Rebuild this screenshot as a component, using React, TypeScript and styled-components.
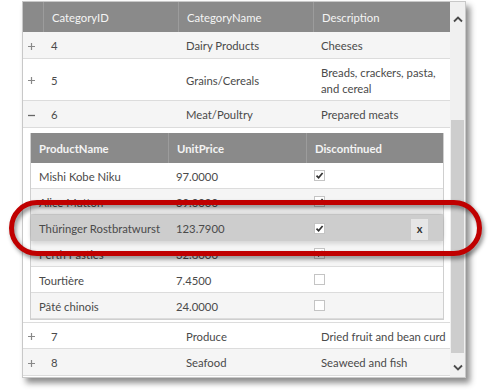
import React, { FC } from 'react';
import styled, { createGlobalStyle } from 'styled-components';

const GlobalStyle = createGlobalStyle`
  html, body {
    margin: 0;
    padding: 0;
    background: #fff;
  }
  body {
    font-family: Lato, 'Open Sans', sans-serif;
    font-size: 11.3px;
    color: #4a4a4a;
  }
`;

const Page = styled.div`
  position: relative;
  width: 500px;
  height: 391px;
  overflow: hidden;
  padding: 1px 0 0 22px;
  box-sizing: border-box;
`;

const Panel = styled.div`
  display: flex;
  width: 442px;
  height: 375px;
  border: 1px solid #c8c8c8;
  background: #fff;
  box-shadow: 4px 5px 6px rgba(0, 0, 0, 0.45);
`;

const Content = styled.div`
  width: 427px;
  display: flex;
  flex-direction: column;
`;

const outerCols = '20px 135px 135px 1fr';
const innerCols = '137px 138px 1fr';

const HeaderRow = styled.div<{ cols: string; height: number; bold?: boolean }>`
  display: grid;
  grid-template-columns: ${(p) => p.cols};
  height: ${(p) => p.height}px;
  background: #8a8a8a;
  color: #f4f4f4;
  font-weight: ${(p) => (p.bold ? 700 : 400)};
  > div {
    display: flex;
    align-items: center;
    padding-left: 8px;
    border-left: 1px solid #9c9c9c;
  }
  > div:first-child {
    border-left: none;
  }
`;

const Row = styled.div<{ cols: string; height: number; bg?: string }>`
  display: grid;
  grid-template-columns: ${(p) => p.cols};
  height: ${(p) => p.height}px;
  box-sizing: border-box;
  border-bottom: 1px solid #dcdcdc;
  background: ${(p) => p.bg || '#fff'};
  line-height: 16px;
  > div {
    display: flex;
    align-items: center;
    padding-left: 8px;
    padding-top: 2px;
    min-width: 0;
    white-space: nowrap;
  }
`;

const DragRow = styled(Row)`
  box-shadow: 0 -3px 4px rgba(0, 0, 0, 0.12), 0 3px 4px rgba(0, 0, 0, 0.12);
  position: relative;
  border-bottom: none;
`;

const Toggle = styled.div`
  padding-left: 4px !important;
`;

const Wrap = styled.div`
  white-space: normal !important;
  padding-right: 4px;
`;

const DetailCell = styled.div`
  padding: 5px 6px 2px 7px;
  border-bottom: 1px solid #dcdcdc;
  background: #fff;
`;

const InnerTable = styled.div`
  border: 1px solid #cfcfcf;
  border-top: none;
`;

const CheckCell = styled.div`
  padding-right: 15px;
`;

const RemoveButton = styled.div`
  margin-left: auto;
  width: 17px;
  height: 21px;
  display: flex;
  align-items: center;
  justify-content: center;
  background: #e6e6e6;
  color: #333;
  font-weight: 700;
  font-size: 11px;
`;

const Box = styled.span`
  width: 11px;
  height: 11px;
  box-sizing: border-box;
  border: 1px solid #c4c4c4;
  background: #fff;
  display: inline-flex;
  align-items: center;
  justify-content: center;
  margin-top: -2px;
`;

const ScrollBar = styled.div`
  width: 15px;
  background: #f0f0f0;
  display: flex;
  flex-direction: column;
  align-items: center;
  padding-top: 14px;
  box-sizing: border-box;
`;

const Thumb = styled.div`
  width: 13px;
  height: 233px;
  margin-top: 97px;
  background: #cdcdcd;
`;

const DownArrow = styled.div`
  margin-top: 7px;
`;

const Ring = styled.div`
  position: absolute;
  left: 9px;
  top: 200px;
  width: 473px;
  height: 56px;
  box-sizing: border-box;
  border: 5px solid #c00000;
  border-radius: 28px;
  filter: drop-shadow(2px 3px 2px rgba(0, 0, 0, 0.45));
  pointer-events: none;
`;

const Check: FC<{ checked: boolean }> = ({ checked }) => (
  <Box>
    {checked && (
      <svg width='9' height='9' viewBox='0 0 9 9'>
        <path d='M1.5 4.6 L3.6 6.8 L7.6 2' stroke='#333' strokeWidth='1.7' fill='none' />
      </svg>
    )}
  </Box>
);

const Chevron: FC<{ down?: boolean }> = ({ down }) => (
  <svg width='10' height='7' viewBox='0 0 10 7'>
    <path d={down ? 'M1 1.5 L5 5.5 L9 1.5' : 'M1 5.5 L5 1.5 L9 5.5'} stroke='#4a4a4a' strokeWidth='1.8' fill='none' />
  </svg>
);

const Plus = () => (
  <svg width='9' height='9' viewBox='0 0 9 9'>
    <path d='M4.5 1 V8 M1 4.5 H8' stroke='#888' strokeWidth='1.2' />
  </svg>
);

const Minus = () => (
  <svg width='9' height='9' viewBox='0 0 9 9'>
    <path d='M1 4.5 H8' stroke='#666' strokeWidth='1.3' />
  </svg>
);

const products = [
  { name: 'Mishi Kobe Niku', price: '97.0000', disc: true, bg: '#fff' },
  { name: 'Alice Mutton', price: '39.0000', disc: true, bg: '#f5f5f5' },
  { name: 'Thüringer Rostbratwurst', price: '123.7900', disc: true, bg: '#cdcdcd', drag: true },
  { name: 'Perth Pasties', price: '32.8000', disc: true, bg: '#f5f5f5' },
  { name: 'Tourtière', price: '7.4500', disc: false, bg: '#fff' },
  { name: 'Pâté chinois', price: '24.0000', disc: false, bg: '#f5f5f5' }
];

const App: FC = () => (
  <Page>
    <GlobalStyle />
    <Panel>
      <Content>
        <HeaderRow cols={outerCols} height={30}>
          <div />
          <div>CategoryID</div>
          <div>CategoryName</div>
          <div>Description</div>
        </HeaderRow>
        <Row cols={outerCols} height={27} bg='#f5f5f5'>
          <Toggle><Plus /></Toggle>
          <div>4</div>
          <div>Dairy Products</div>
          <div>Cheeses</div>
        </Row>
        <Row cols={outerCols} height={42}>
          <Toggle><Plus /></Toggle>
          <div>5</div>
          <div>Grains/Cereals</div>
          <Wrap>Breads, crackers, pasta, and cereal</Wrap>
        </Row>
        <Row cols={outerCols} height={27} bg='#f5f5f5'>
          <Toggle><Minus /></Toggle>
          <div>6</div>
          <div>Meat/Poultry</div>
          <div>Prepared meats</div>
        </Row>
        <DetailCell>
          <InnerTable>
            <HeaderRow cols={innerCols} height={30} bold>
              <div>ProductName</div>
              <div>UnitPrice</div>
              <div>Discontinued</div>
            </HeaderRow>
            {products.map((p) => {
              const R = p.drag ? DragRow : Row;
              return (
                <R key={p.name} cols={innerCols} height={26} bg={p.bg}>
                  <div>{p.name}</div>
                  <div>{p.price}</div>
                  <CheckCell>
                    <Check checked={p.disc} />
                    {p.drag && <RemoveButton>x</RemoveButton>}
                  </CheckCell>
                </R>
              );
            })}
          </InnerTable>
        </DetailCell>
        <Row cols={outerCols} height={26}>
          <Toggle><Plus /></Toggle>
          <div>7</div>
          <div>Produce</div>
          <div>Dried fruit and bean curd</div>
        </Row>
        <Row cols={outerCols} height={27} bg='#f5f5f5'>
          <Toggle><Plus /></Toggle>
          <div>8</div>
          <div>Seafood</div>
          <div>Seaweed and fish</div>
        </Row>
      </Content>
      <ScrollBar>
        <Chevron />
        <Thumb />
        <DownArrow>
          <Chevron down />
        </DownArrow>
      </ScrollBar>
    </Panel>
    <Ring />
  </Page>
);

export default App;
